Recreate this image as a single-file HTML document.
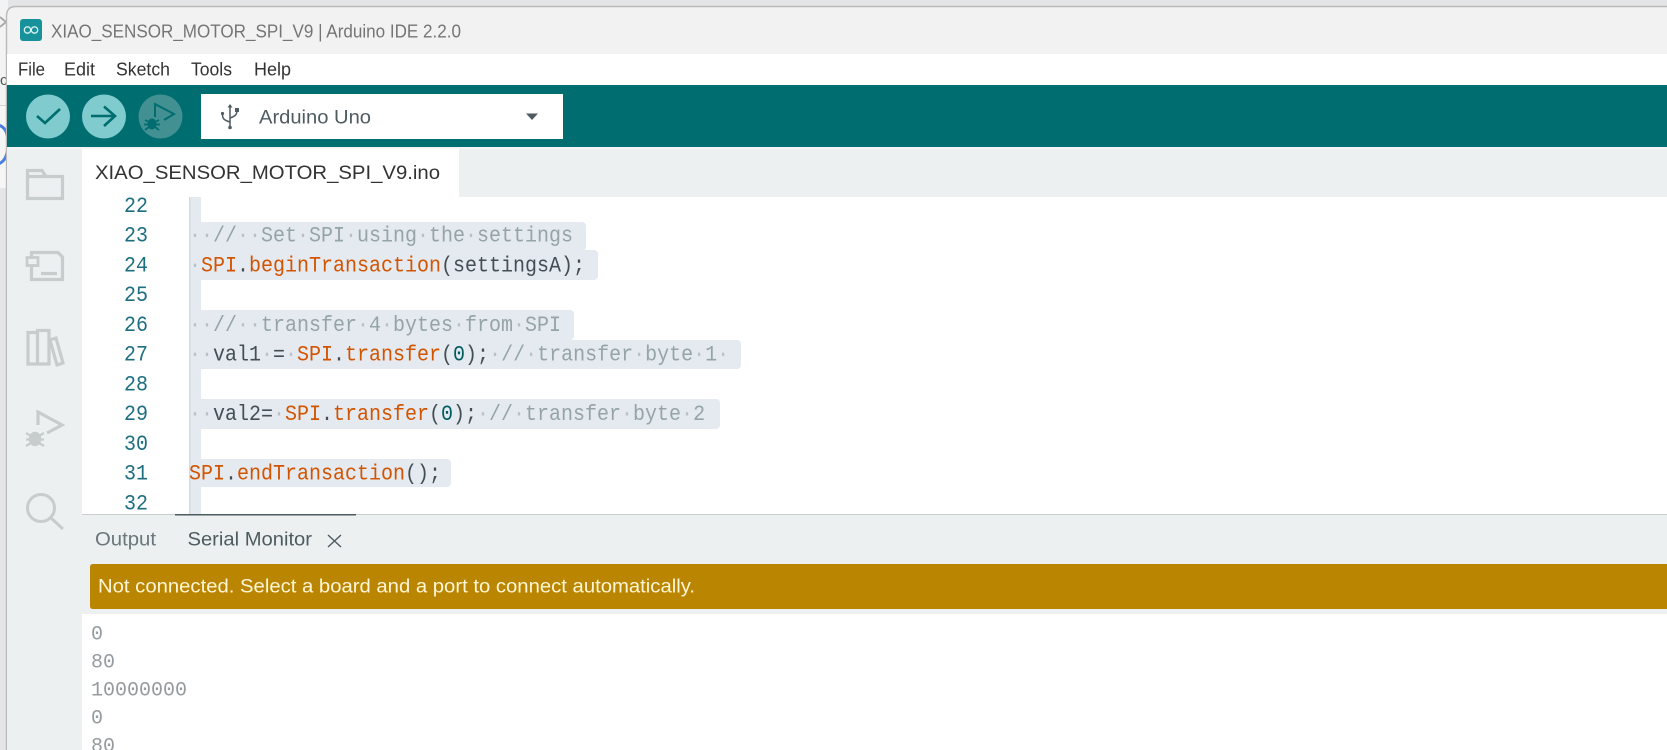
<!DOCTYPE html>
<html>
<head>
<meta charset="utf-8">
<style>
html,body{margin:0;padding:0;width:1667px;height:750px;overflow:hidden;background:#fff}
svg{display:block;filter:blur(0.35px)}
text{white-space:pre}
.ui{font-family:"Liberation Sans",sans-serif}
.m{font-family:"Liberation Mono",monospace;font-size:20px}
.ln{fill:#1d6f80;text-anchor:end}
.c{fill:#95a5a6}.d{fill:#b9c1c6}.k{fill:#d35400}.t{fill:#434f54}.n{fill:#005c5f}
.s{fill:#e5eaf0}
.ic{fill:none;stroke:#c7cccc;stroke-width:3.2}
</style>
</head>
<body>
<svg width="1667" height="750" viewBox="0 0 1667 750" xmlns="http://www.w3.org/2000/svg">
<defs>
<clipPath id="code"><rect x="82" y="197" width="1585" height="317"/></clipPath>
</defs>

<!-- outside the window -->
<rect width="1667" height="750" fill="#e4e5e6"/>
<rect x="0" y="0" width="8" height="105" fill="#f3f3f3"/>
<rect x="0" y="105" width="8" height="1" fill="#d2d2d2"/>
<rect x="0" y="106" width="8" height="82" fill="#f6f6f6"/>
<path d="M-2 125 C6 127 8 134 8 144 C8 154 5 162 -2 164" fill="none" stroke="#4a7fdc" stroke-width="3"/>
<path d="M0 17 L6 22 M0 27 L6 22" stroke="#aaa" stroke-width="2" fill="none"/>
<text x="0" y="85" class="ui" font-size="15" fill="#555">c</text>

<!-- window -->
<path d="M6.5 760 V16 Q6.5 6.5 16 6.5 H1680 V760 Z" fill="#f2f2f2" stroke="#b9b9b9" stroke-width="1.4"/>

<!-- title bar -->
<rect x="20" y="19" width="22" height="22" rx="3" fill="#17929a"/>
<circle cx="27.5" cy="30" r="3.2" fill="none" stroke="#d8f0f0" stroke-width="1.3"/>
<circle cx="34.5" cy="30" r="3.2" fill="none" stroke="#d8f0f0" stroke-width="1.3"/>
<text x="51" y="37.500" class="ui" font-size="18.500" fill="#757575" textLength="410" lengthAdjust="spacingAndGlyphs">XIAO_SENSOR_MOTOR_SPI_V9 | Arduino IDE 2.2.0</text>

<!-- menu -->
<rect x="7" y="54" width="1660" height="31" fill="#fff"/>
<g class="ui" font-size="18" fill="#333">
<text x="18" y="75.500" textLength="27" lengthAdjust="spacingAndGlyphs">File</text>
<text x="64" y="75.500" textLength="31" lengthAdjust="spacingAndGlyphs">Edit</text>
<text x="116" y="75.500" textLength="54" lengthAdjust="spacingAndGlyphs">Sketch</text>
<text x="191" y="75.500" textLength="41" lengthAdjust="spacingAndGlyphs">Tools</text>
<text x="254" y="75.500" textLength="37" lengthAdjust="spacingAndGlyphs">Help</text>
</g>

<!-- toolbar -->
<rect x="7" y="85" width="1660" height="62" fill="#006d70"/>
<circle cx="48" cy="116.5" r="22" fill="#7fcbcd"/>
<path d="M37 116 L45 123 L60 109" fill="none" stroke="#006d70" stroke-width="2.6"/>
<circle cx="104" cy="116.5" r="22" fill="#7fcbcd"/>
<path d="M91 116 H115 M104 106.5 L115 116 L104 126" fill="none" stroke="#006d70" stroke-width="2.6"/>
<circle cx="160.5" cy="116.5" r="22" fill="#429091"/>
<path d="M155 117 V104 L174 114 L164 120" fill="none" stroke="#006d70" stroke-width="2"/>
<ellipse cx="152" cy="124" rx="4.500" ry="5.500" fill="#006d70"/>
<path d="M145 120 L149 122 M159 120 L155 122 M144 124.5 H160 M145 130 L149 127 M159 130 L155 127" stroke="#006d70" stroke-width="1.8" fill="none"/>

<rect x="201" y="94" width="362" height="45" fill="#fff"/>
<path d="M230 105 V128 M230 122 C223 120 222.5 118 222.5 114 M230 118 C236 116 237 114 237 110" fill="none" stroke="#4e5b61" stroke-width="1.5"/>
<path d="M227.5 107.5 L230 104 L232.5 107.5 Z" fill="#4e5b61"/>
<circle cx="222.5" cy="113.5" r="1.6" fill="#4e5b61"/>
<rect x="235" y="108" width="4" height="4" fill="#4e5b61"/>
<circle cx="230" cy="127.5" r="1.8" fill="#4e5b61"/>
<text x="259" y="123.500" class="ui" font-size="19" fill="#4e5b61" textLength="112" lengthAdjust="spacingAndGlyphs">Arduino Uno</text>
<path d="M526 113.5 H538 L532 120 Z" fill="#4e5b61"/>

<!-- sidebar -->
<rect x="7" y="147" width="75" height="603" fill="#ecf0f1"/>
<path class="ic" d="M27.5 176 V170.5 H42 L46 176.5 H62.5 V198.5 H27.5 Z M27.5 176.5 H46"/>
<path class="ic" d="M31.5 257 V252.500 H58 L62.500 257 V279.500 H31.500 V265"/>
<rect x="27" y="257.5" width="11" height="8" fill="#ecf0f1" stroke="#c7cccc" stroke-width="2.8"/>
<path d="M41 273.5 H57" stroke="#c7cccc" stroke-width="3.200" fill="none"/>
<path class="ic" d="M28 332.5 H37.5 V364 H28 Z M37.5 330.5 H49 V364 H37.5 Z M50 340 L56 338 L63 363 L57 365 Z"/>
<path class="ic" d="M38 425 V412 L62 425 L47 433"/>
<ellipse cx="35" cy="439" rx="5" ry="6" fill="#c7cccc" stroke="#c7cccc" stroke-width="2.4"/>
<path d="M26 433 L31 436 M44 433 L39 436 M26 439.5 H44 M26 446 L31 443 M44 446 L39 443" stroke="#c7cccc" stroke-width="2.2" fill="none"/>
<circle cx="41" cy="508" r="13.5" fill="none" stroke="#c7cccc" stroke-width="3"/>
<path d="M51 518 L63 529" stroke="#c7cccc" stroke-width="3" fill="none"/>

<!-- tab bar -->
<rect x="82" y="149" width="1585" height="48" fill="#ecf0f1"/>
<rect x="7" y="147" width="1660" height="2" fill="#f3f5f5"/>
<rect x="82" y="149" width="377" height="48" fill="#fff"/>
<text x="95" y="179" class="ui" font-size="19.500" fill="#333" textLength="345" lengthAdjust="spacingAndGlyphs">XIAO_SENSOR_MOTOR_SPI_V9.ino</text>

<!-- editor -->
<rect x="82" y="197" width="1585" height="317" fill="#fff"/>
<g clip-path="url(#code)">
<rect class="s" x="189" y="197" width="12" height="317"/>
<rect class="s" x="189" y="222" width="397" height="29" rx="4"/>
<rect class="s" x="189" y="250" width="409" height="30" rx="4"/>
<rect class="s" x="189" y="310" width="385" height="30" rx="4"/>
<rect class="s" x="189" y="340" width="552" height="29" rx="4"/>
<rect class="s" x="189" y="399" width="531" height="30" rx="4"/>
<rect class="s" x="189" y="459" width="262" height="28" rx="4"/>
<rect x="201" y="190" width="400" height="32" rx="4" fill="#fff"/>
<rect x="201" y="280" width="400" height="30" rx="4" fill="#fff"/>
<rect x="201" y="369" width="400" height="30" rx="4" fill="#fff"/>
<rect x="201" y="429" width="400" height="30" rx="4" fill="#fff"/>
<rect x="201" y="487" width="400" height="40" rx="4" fill="#fff"/>
<rect x="189" y="197" width="1.4" height="317" fill="#d5dade"/>

<g class="m" transform="scale(1,1.1)">
<text class="ln" x="148" y="192.73">22</text>
<text class="ln" x="148" y="219.77">23</text>
<text class="ln" x="148" y="246.82">24</text>
<text class="ln" x="148" y="273.86">25</text>
<text class="ln" x="148" y="300.91">26</text>
<text class="ln" x="148" y="327.95">27</text>
<text class="ln" x="148" y="355">28</text>
<text class="ln" x="148" y="382.05">29</text>
<text class="ln" x="148" y="409.09">30</text>
<text class="ln" x="148" y="436.14">31</text>
<text class="ln" x="148" y="463.18">32</text>

<text x="189" y="219.77"><tspan class="d">··</tspan><tspan class="c">//</tspan><tspan class="d">··</tspan><tspan class="c">Set</tspan><tspan class="d">·</tspan><tspan class="c">SPI</tspan><tspan class="d">·</tspan><tspan class="c">using</tspan><tspan class="d">·</tspan><tspan class="c">the</tspan><tspan class="d">·</tspan><tspan class="c">settings</tspan></text>
<text x="189" y="246.82"><tspan class="d">·</tspan><tspan class="k">SPI</tspan><tspan class="t">.</tspan><tspan class="k">beginTransaction</tspan><tspan class="t">(settingsA);</tspan></text>
<text x="189" y="300.91"><tspan class="d">··</tspan><tspan class="c">//</tspan><tspan class="d">··</tspan><tspan class="c">transfer</tspan><tspan class="d">·</tspan><tspan class="c">4</tspan><tspan class="d">·</tspan><tspan class="c">bytes</tspan><tspan class="d">·</tspan><tspan class="c">from</tspan><tspan class="d">·</tspan><tspan class="c">SPI</tspan></text>
<text x="189" y="327.95"><tspan class="d">··</tspan><tspan class="t">val1</tspan><tspan class="d">·</tspan><tspan class="t">=</tspan><tspan class="d">·</tspan><tspan class="k">SPI</tspan><tspan class="t">.</tspan><tspan class="k">transfer</tspan><tspan class="t">(</tspan><tspan class="n">0</tspan><tspan class="t">);</tspan><tspan class="d">·</tspan><tspan class="c">//</tspan><tspan class="d">·</tspan><tspan class="c">transfer</tspan><tspan class="d">·</tspan><tspan class="c">byte</tspan><tspan class="d">·</tspan><tspan class="c">1</tspan><tspan class="d">·</tspan></text>
<text x="189" y="382.05"><tspan class="d">··</tspan><tspan class="t">val2=</tspan><tspan class="d">·</tspan><tspan class="k">SPI</tspan><tspan class="t">.</tspan><tspan class="k">transfer</tspan><tspan class="t">(</tspan><tspan class="n">0</tspan><tspan class="t">);</tspan><tspan class="d">·</tspan><tspan class="c">//</tspan><tspan class="d">·</tspan><tspan class="c">transfer</tspan><tspan class="d">·</tspan><tspan class="c">byte</tspan><tspan class="d">·</tspan><tspan class="c">2</tspan></text>
<text x="189" y="436.14"><tspan class="k">SPI</tspan><tspan class="t">.</tspan><tspan class="k">endTransaction</tspan><tspan class="t">();</tspan></text>
</g>
</g>

<!-- bottom panel -->
<rect x="82" y="514" width="1585" height="100" fill="#ecf0f1"/>
<rect x="82" y="514" width="1585" height="1" fill="#c9ced1"/>
<rect x="175" y="514" width="181" height="1.5" fill="#4e5b61"/>
<text x="95" y="545.500" class="ui" font-size="19.500" fill="#6b777c" textLength="61" lengthAdjust="spacingAndGlyphs">Output</text>
<text x="187.500" y="545.500" class="ui" font-size="19.500" fill="#4e5b61" textLength="124.500" lengthAdjust="spacingAndGlyphs">Serial Monitor</text>
<path d="M328 535 L341 547 M341 535 L328 547" stroke="#4e5b61" stroke-width="1.4" fill="none"/>
<path d="M1667 564 H93 Q90 564 90 567 V606 Q90 609 93 609 H1667 Z" fill="#ba8500"/>
<text x="98" y="592.500" class="ui" font-size="19" fill="#fff6d6" textLength="597" lengthAdjust="spacingAndGlyphs">Not connected. Select a board and a port to connect automatically.</text>

<!-- serial output -->
<rect x="82" y="614" width="1585" height="136" fill="#fff"/>
<g class="m" fill="#969b9f">
<text x="91" y="639.500">0</text>
<text x="91" y="667.500">80</text>
<text x="91" y="695.500">10000000</text>
<text x="91" y="723.500">0</text>
<text x="91" y="751.500">80</text>
</g>
</svg>
</body>
</html>
